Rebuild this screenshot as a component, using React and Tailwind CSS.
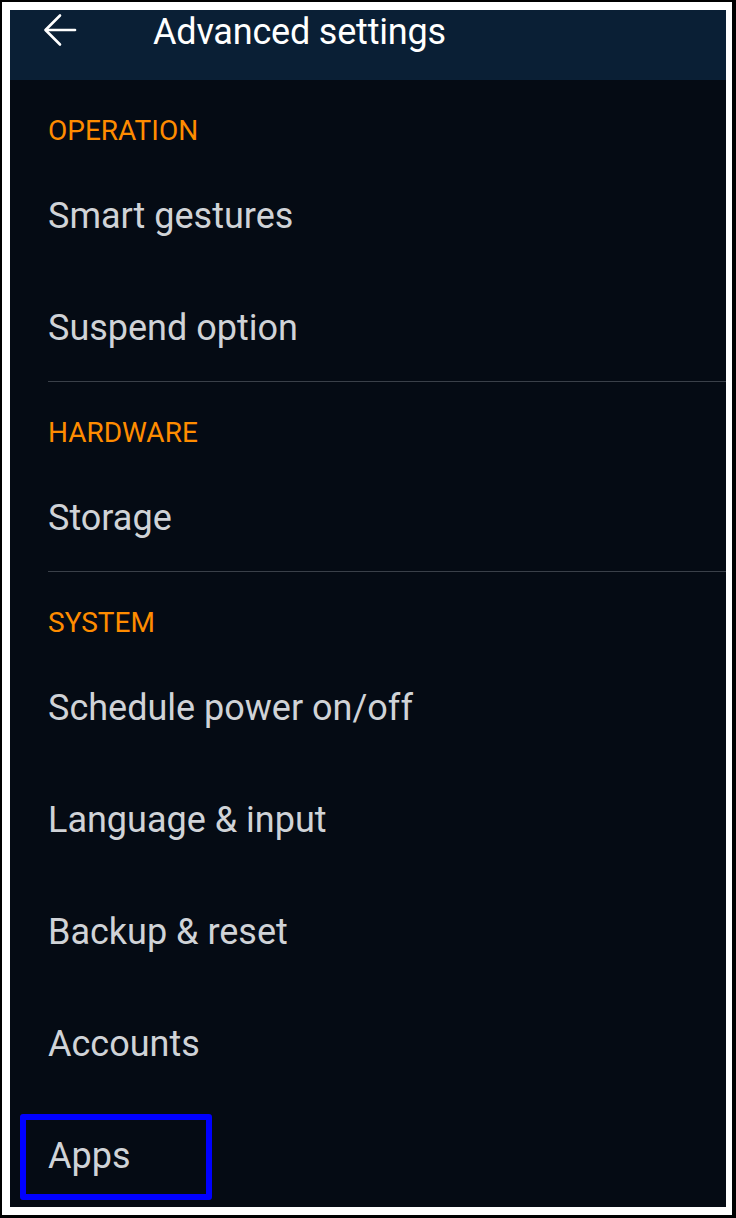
import React from 'react';

const sections = [
  { title: 'OPERATION', items: ['Smart gestures', 'Suspend option'] },
  { title: 'HARDWARE', items: ['Storage'] },
  {
    title: 'SYSTEM',
    items: ['Schedule power on/off', 'Language & input', 'Backup & reset', 'Accounts', 'Apps'],
    last: true,
  },
];

const BackArrow = () => (
  <svg width="36" height="36" viewBox="0 0 36 36" fill="none" stroke="#ffffff" strokeWidth="2.6" strokeLinecap="round" strokeLinejoin="round">
    <path d="M33 18H4" />
    <path d="M18 3.5L3.5 18L18 32.5" />
  </svg>
);

export default function App() {
  return (
    <div className="w-[736px] h-[1218px] bg-black pt-[2px] pl-[2px] pr-[4px] pb-[3px]" style={{ fontFamily: 'Roboto, "Noto Sans", sans-serif' }}>
      <div className="w-full h-full bg-white pt-[8px] pl-[8px] pr-[6px] pb-[8px]">
        <div className="relative w-full h-full bg-[#050b14] overflow-hidden">
          {/* Top bar */}
          <div className="h-[70px] bg-[#0a1f35] flex items-start">
            <div className="w-[143px] h-10 flex items-center pl-[32px]">
              <BackArrow />
            </div>
            <div className="h-10 mt-[2px] leading-10 text-[36px] text-white tracking-[-0.2px]">Advanced settings</div>
          </div>

          {sections.map((section) => (
            <div key={section.title}>
              <div className="h-[78px] pt-[37px] pl-[38px]">
                <div className="leading-[28px] text-[28px] text-[#ff8c00]">{section.title}</div>
              </div>
              {section.items.map((item, i) => {
                const isLast = i === section.items.length - 1 && !section.last;
                return (
                  <div
                    key={item}
                    className={`${isLast ? 'h-[111px]' : 'h-[112px]'} flex items-center pt-[4px] pl-[38px] text-[36px] text-[#d0d3d7]`}
                  >
                    {item}
                  </div>
                );
              })}
              {!section.last && <div className="ml-[38px] h-px bg-[#3a4049]" />}
            </div>
          ))}

          {/* highlight box */}
          <div className="absolute left-[10px] top-[1104px] w-[192px] h-[86px] border-[6px] border-[#0000ff] rounded-[3px]" />
        </div>
      </div>
    </div>
  );
}
